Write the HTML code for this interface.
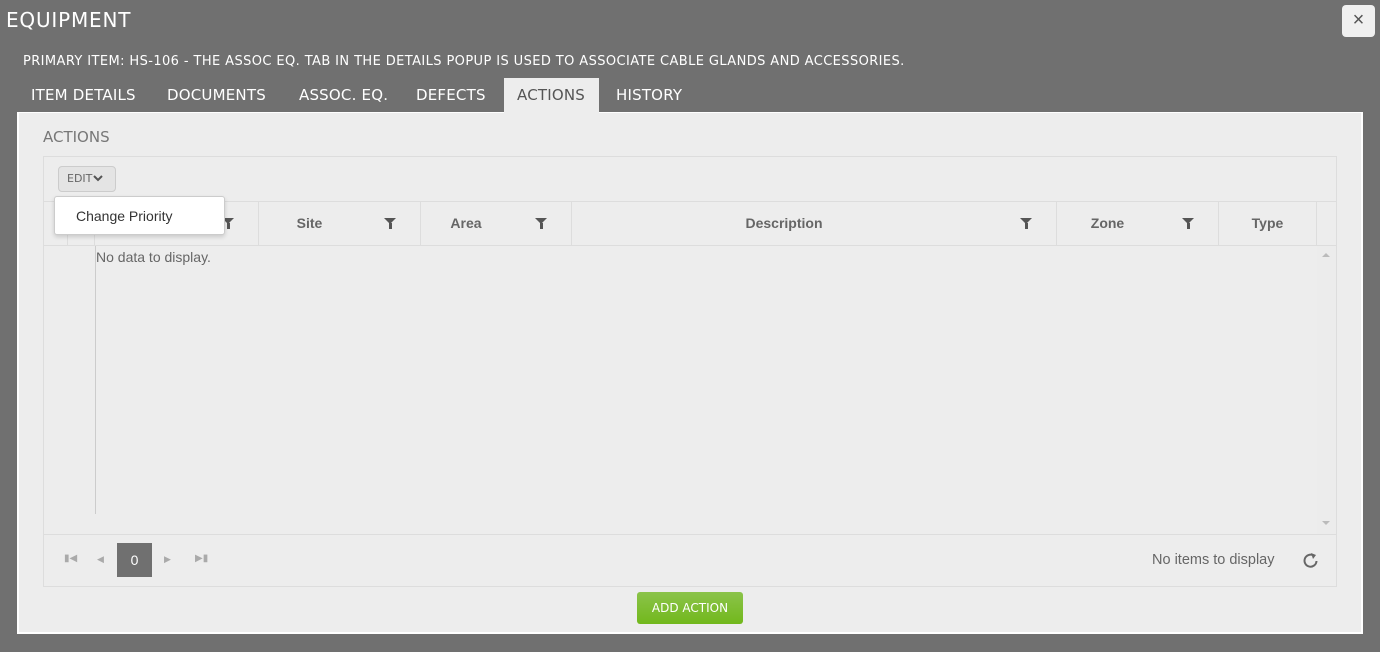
<!DOCTYPE html>
<html><head><style>
*{box-sizing:border-box;margin:0;padding:0}
body{width:1380px;height:652px;background:#707070;font-family:"Liberation Sans",sans-serif;position:relative;overflow:hidden;color:#555}
.a{position:absolute}
.m{font-family:"DejaVu Sans","Liberation Sans",sans-serif}
.t{color:#fff}
.tab{position:absolute;top:78px;height:34px;line-height:34px;font-size:15px;color:#fff;font-family:"DejaVu Sans","Liberation Sans",sans-serif;letter-spacing:0.2px;white-space:nowrap}
.hc{position:absolute;top:202px;height:43px;border-right:1px solid #ddd;line-height:43px;font-size:14px;font-weight:bold;color:#666;text-align:center;padding-right:60px}
.f{position:absolute;top:16px;width:0;height:0;border-left:6px solid transparent;border-right:6px solid transparent;border-top:6px solid #555}
.f:after{content:"";position:absolute;left:-1.5px;top:-1px;width:3px;height:6px;background:#555}
</style></head><body>
<div class="a t m" style="left:6px;top:8px;font-size:20px;letter-spacing:0.8px">EQUIPMENT</div>
<div class="a" style="left:1342px;top:5px;width:33px;height:32px;background:#f0f0f0;border-radius:4px;text-align:center;line-height:31px;font-size:20px;color:#555">×</div>
<div class="a t m" style="left:23px;top:54px;font-size:13px;letter-spacing:0.4px;white-space:nowrap">PRIMARY ITEM: HS-106 - THE ASSOC EQ. TAB IN THE DETAILS POPUP IS USED TO ASSOCIATE CABLE GLANDS AND ACCESSORIES.</div>
<div class="tab" style="left:31px">ITEM DETAILS</div>
<div class="tab" style="left:167px">DOCUMENTS</div>
<div class="tab" style="left:299px">ASSOC. EQ.</div>
<div class="tab" style="left:416px">DEFECTS</div>
<div class="a" style="left:504px;top:78px;width:95px;height:36px;background:#ededed"></div>
<div class="tab" style="left:517px;color:#555">ACTIONS</div>
<div class="tab" style="left:616px">HISTORY</div>
<div class="a" style="left:17px;top:112px;width:1346px;height:522px;background:#ededed;border:2px solid #fff;border-top:1px solid #fff"></div>
<div class="a" style="left:504px;top:110px;width:95px;height:4px;background:#ededed"></div>
<div class="a m" style="left:43px;top:128px;font-size:15px;color:#777">ACTIONS</div>
<div class="a" style="left:43px;top:156px;width:1294px;height:431px;border:1px solid #ddd"></div>
<div class="a" style="left:44px;top:201px;width:1292px;height:1px;background:#ddd"></div>
<div class="a" style="left:44px;top:245px;width:1292px;height:1px;background:#ddd"></div>
<div class="a" style="left:44px;top:534px;width:1292px;height:1px;background:#ddd"></div>
<div class="a m" style="left:58px;top:166px;width:58px;height:26px;border:1px solid #ccc;border-radius:4px;background:#e4e4e4;font-size:11px;line-height:24px;padding-left:8px;color:#666">EDIT<svg width="10" height="8" viewBox="0 0 10 8" style="margin-left:1px"><path d="M1 2l4 4 4-4" fill="none" stroke="#555" stroke-width="2"/></svg></div>
<div class="hc" style="left:44px;width:24px;padding:0"></div>
<div class="hc" style="left:68px;width:27px;padding:0"></div>
<div class="hc" style="left:95px;width:164px"><div class="f" style="left:127px"></div></div>
<div class="hc" style="left:259px;width:162px">Site<div class="f" style="left:125px"></div></div>
<div class="hc" style="left:421px;width:151px">Area<div class="f" style="left:114px"></div></div>
<div class="hc" style="left:572px;width:485px">Description<div class="f" style="left:448px"></div></div>
<div class="hc" style="left:1057px;width:162px">Zone<div class="f" style="left:125px"></div></div>
<div class="hc" style="left:1219px;width:98px;padding:0">Type</div>
<div class="a" style="left:95px;top:246px;width:1px;height:268px;background:#ccc"></div>
<div class="a" style="left:96px;top:249px;font-size:14px;color:#666">No data to display.</div>
<div class="a" style="left:1317px;top:246px;width:19px;height:288px;background:#ececec"></div>
<div class="a" style="left:1322px;top:253px;border:4px solid transparent;border-bottom:4px solid #bbb;border-top:0"></div>
<div class="a" style="left:1322px;top:521px;border:4px solid transparent;border-top:4px solid #bbb;border-bottom:0"></div>
<div class="a" style="left:54px;top:196px;width:171px;height:39px;background:#fff;border:1px solid #ccc;border-radius:3px;box-shadow:0 2px 4px rgba(0,0,0,.15);font-size:14px;line-height:38px;padding-left:21px;color:#333">Change Priority</div>
<div class="a" style="left:64px;top:553px;font-size:10px;color:#aaa">&#9646;&#9664;</div>
<div class="a" style="left:97px;top:554px;font-size:9px;color:#aaa">&#9664;</div>
<div class="a" style="left:117px;top:543px;width:35px;height:34px;background:#707070;color:#fff;text-align:center;line-height:34px;font-size:14px">0</div>
<div class="a" style="left:164px;top:554px;font-size:9px;color:#aaa">&#9654;</div>
<div class="a" style="left:195px;top:553px;font-size:10px;color:#aaa">&#9654;&#9646;</div>
<div class="a" style="left:1152px;top:552px;font-size:14.5px;color:#666">No items to display</div>
<svg class="a" style="left:1302px;top:552px" width="17" height="17" viewBox="0 0 17 17"><path d="M11.5 3.5A6 6 0 1 0 14.5 9" fill="none" stroke="#666" stroke-width="2"/><path d="M9 1l5 2-3 4z" fill="#666"/></svg>
<div class="a m" style="left:637px;top:592px;width:106px;height:32px;background:linear-gradient(#8bc34a,#72b81c);border-radius:3px;color:#fff;font-size:12px;text-align:center;line-height:32px;white-space:nowrap">ADD ACTION</div>
</body></html>
